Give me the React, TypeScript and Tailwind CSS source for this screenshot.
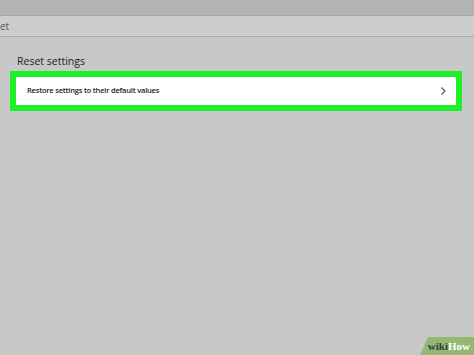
import React from 'react';

const App: React.FC = () => {
  return (
    <div className="relative w-[474px] h-[355px] overflow-hidden bg-[#c8c8c8] font-['Open_Sans','Liberation_Sans',sans-serif]">
      {/* window title strip */}
      <div className="h-[16px] bg-[#b3b3b3] border-b border-[#a4a4a4]" />
      {/* breadcrumb strip */}
      <div className="h-[21px] bg-[#cdcdcd] border-b border-[#a9a9a9] flex items-center">
        <span className="text-[10px] text-[#555] leading-none">et</span>
      </div>

      <div className="pt-[17px] px-[10px]">
        <h2 className="pl-[7px] text-[10.5px] text-[#1e1e1e] leading-[14px]">Reset settings</h2>
        <div className="mt-[3px] w-[452px] h-[40px] border-[6px] border-[#1fef28] bg-white flex items-center justify-between pl-[11px] pr-[9px]">
          <span className="text-[7.5px] tracking-[-0.2px] font-semibold text-[#222]">Restore settings to their default values</span>
          <svg width="8" height="10" viewBox="0 0 8 10" fill="none" stroke="#555" strokeWidth="1.1">
            <path d="M2.5 1.5 L6 5 L2.5 8.5" />
          </svg>
        </div>
      </div>

      {/* wikiHow badge */}
      <div className="absolute right-0 bottom-0 h-[18px] w-[54px] bg-[#93b874] [clip-path:polygon(8px_0,100%_0,100%_100%,0_100%)] flex items-center justify-end pr-[4px]">
        <span className="font-['Liberation_Serif',serif] font-bold text-[11px] leading-none">
          <span className="text-[#3a3a3a]">wiki</span>
          <span className="text-white">How</span>
        </span>
      </div>
    </div>
  );
};

export default App;
